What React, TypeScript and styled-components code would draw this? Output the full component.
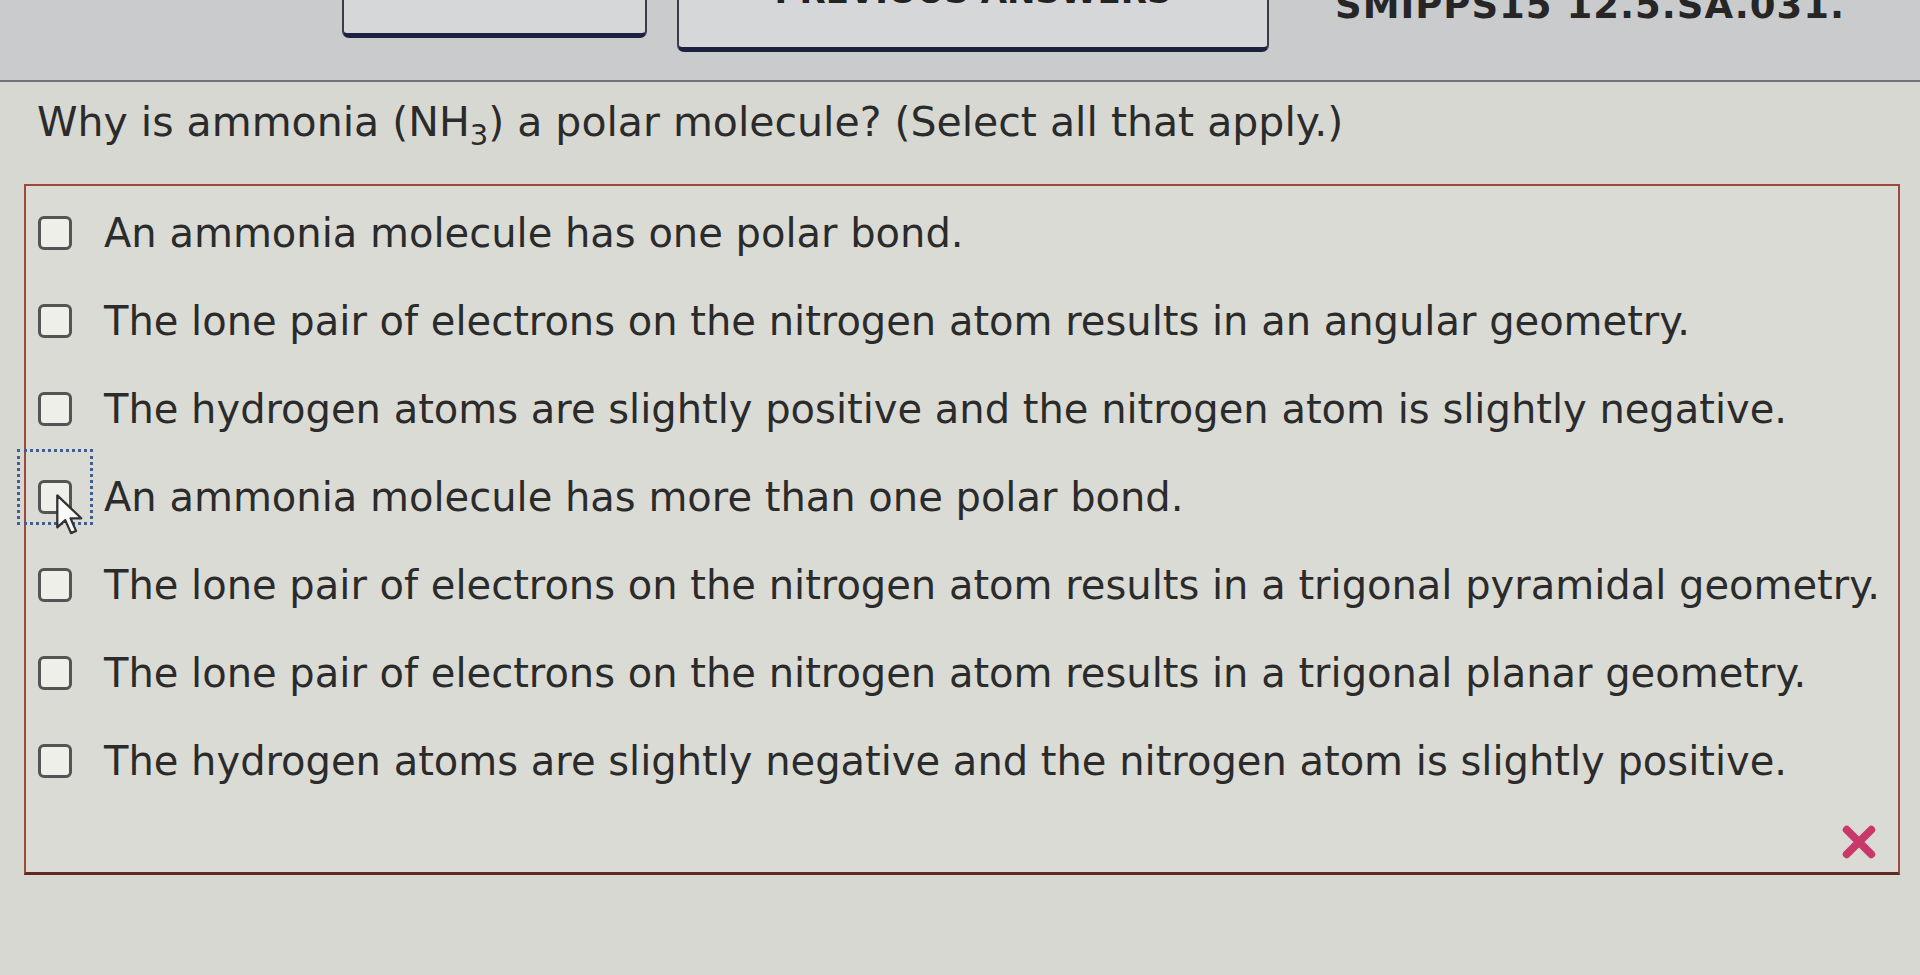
import React from "react";
import styled, { createGlobalStyle } from "styled-components";

const Global = createGlobalStyle`
  html, body {
    margin: 0;
    padding: 0;
    background: #d8d8d3;
  }
  body {
    font-family: "DejaVu Sans", Verdana, sans-serif;
    color: #2b2b2b;
    overflow: hidden;
  }
`;

const Page = styled.div`
  width: 1920px;
  height: 975px;
  display: flex;
  flex-direction: column;
  overflow: hidden;
`;

const Header = styled.div`
  height: 80px;
  flex-shrink: 0;
  display: flex;
  align-items: flex-start;
  padding-left: 342px;
  gap: 30px;
  background: #cacbcd;
  border-bottom: 2px solid #727378;
  overflow: hidden;
`;

const TabButton = styled.div<{ $w: number; $h: number }>`
  width: ${(p) => p.$w}px;
  height: ${(p) => p.$h}px;
  margin-top: -22px;
  box-sizing: border-box;
  border: 2px solid #3a3c48;
  border-bottom: 5px solid #1c2142;
  border-radius: 0 0 7px 7px;
  background: #d6d7d8;
  display: flex;
  align-items: flex-end;
  justify-content: center;
  padding-bottom: 36px;
  font-weight: bold;
  font-size: 34px;
  color: #222;
  white-space: nowrap;
`;

const Code = styled.div`
  margin-top: -16px;
  margin-left: 36px;
  font-weight: bold;
  font-size: 37px;
  color: #262626;
  letter-spacing: 1px;
`;

const Question = styled.div`
  padding: 16px 0 0 37px;
  height: 84px;
  box-sizing: border-box;
  font-size: 41px;
  line-height: 48px;
  flex-shrink: 0;
`;

const Sub = styled.sub`
  font-size: 29px;
`;

const AnswerBox = styled.div`
  margin: 18px 0 0 24px;
  width: 1876px;
  height: 691px;
  box-sizing: border-box;
  border: 2px solid #9d4a3c;
  border-bottom: 3px solid #5e2a22;
  background: #dbdbd6;
  display: flex;
  flex-direction: column;
  padding-top: 3px;
`;

const Option = styled.label`
  height: 88px;
  display: flex;
  align-items: center;
  gap: 32px;
  padding-left: 12px;
  font-size: 40px;
  white-space: nowrap;
`;

const Box = styled.span<{ $focus?: boolean }>`
  width: 34px;
  height: 34px;
  flex-shrink: 0;
  box-sizing: border-box;
  border: 3px solid #545454;
  border-radius: 6px;
  background: #efefea;
  position: relative;

  &::after {
    content: "";
    display: ${(p) => (p.$focus ? "block" : "none")};
    position: absolute;
    left: -24px;
    top: -34px;
    right: -24px;
    bottom: -14px;
    border: 3px dotted #3f5f93;
  }
`;

const Cursor = styled.svg`
  position: absolute;
  left: 14px;
  top: 10px;
  z-index: 2;
`;

const Footer = styled.div`
  flex: 1;
  display: flex;
  justify-content: flex-end;
  align-items: center;
  padding-right: 20px;
  padding-top: 6px;
`;

const options = [
  "An ammonia molecule has one polar bond.",
  "The lone pair of electrons on the nitrogen atom results in an angular geometry.",
  "The hydrogen atoms are slightly positive and the nitrogen atom is slightly negative.",
  "An ammonia molecule has more than one polar bond.",
  "The lone pair of electrons on the nitrogen atom results in a trigonal pyramidal geometry.",
  "The lone pair of electrons on the nitrogen atom results in a trigonal planar geometry.",
  "The hydrogen atoms are slightly negative and the nitrogen atom is slightly positive.",
];

export default function App() {
  return (
    <Page>
      <Global />
      <Header>
        <TabButton $w={305} $h={60}>DETAILS</TabButton>
        <TabButton $w={592} $h={74}>PREVIOUS ANSWERS</TabButton>
        <Code>SMIPPS15 12.5.SA.031.</Code>
      </Header>
      <Question>
        Why is ammonia (NH<Sub>3</Sub>) a polar molecule? (Select all that apply.)
      </Question>
      <AnswerBox>
        {options.map((text, i) => (
          <Option key={i}>
            <Box $focus={i === 3}>
              {i === 3 && (
                <Cursor width="32" height="46" viewBox="0 0 14 20">
                  <path
                    d="M1 1 L1 15 L4.5 11.8 L7 17.5 L9.2 16.5 L6.8 11 L11.5 11 Z"
                    fill="#fafafa"
                    stroke="#333"
                    strokeWidth="1"
                    strokeLinejoin="round"
                  />
                </Cursor>
              )}
            </Box>
            <span>{text}</span>
          </Option>
        ))}
        <Footer>
          <svg width="38" height="38" viewBox="0 0 34 34">
            <path d="M6 6 L28 28 M28 6 L6 28" stroke="#c8386b" strokeWidth="7" strokeLinecap="round" />
          </svg>
        </Footer>
      </AnswerBox>
    </Page>
  );
}
